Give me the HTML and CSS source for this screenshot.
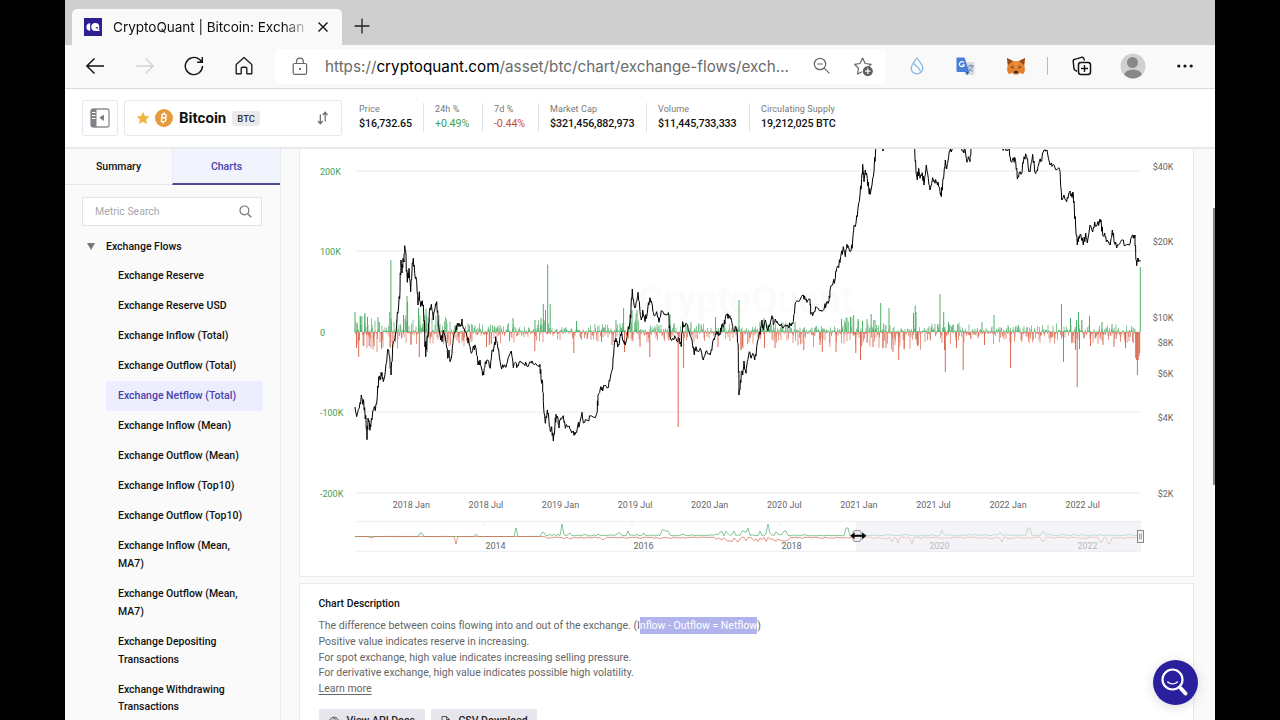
FILE: index.html
```
<!DOCTYPE html>
<html lang="en">
<head>
    <meta charset="UTF-8">
    <meta name="viewport" content="width=device-width, initial-scale=1.0">
    <title>CryptoQuant | Bitcoin: Exchange Netflow (Total)</title>
    <link rel="stylesheet" href="styles.css">
</head>
<body>
<div class="window">
    <div class="tabbar">
        <div class="tab">
            <svg class="favicon" width="18" height="18" viewBox="0 0 18 18"><rect width="18" height="18" fill="#2c1f92"/><path d="M6.2 5.2v7.6a3.8 3.8 0 0 1 0-7.6z" fill="#fff"/><circle cx="11.3" cy="9" r="4" fill="#fff"/><path d="M11.5 9h2.2v2.6z" fill="#2c1f92"/><path d="M12 11.5h3.5V13H12z" fill="#fff"/></svg>
            <span class="tab-title">CryptoQuant | Bitcoin: Exchan</span>
            <svg class="tab-close" width="12" height="12" viewBox="0 0 12 12"><path d="M1.5 1.5l9 9M10.5 1.5l-9 9" stroke="#111" stroke-width="1.4"/></svg>
        </div>
        <svg class="tab-new" width="16" height="16" viewBox="0 0 16 16"><path d="M8 .5v15M.5 8h15" stroke="#222" stroke-width="1.3"/></svg>
    </div>

    <div class="toolbar">
        <div class="nav-icons">
            <svg width="20" height="18" viewBox="0 0 20 18"><path d="M19 9H1.8M9.5 1.5L1.8 9l7.7 7.5" fill="none" stroke="#111" stroke-width="1.4"/></svg>
            <svg width="20" height="18" viewBox="0 0 20 18"><path d="M1 9h17.2M10.5 1.5L18.2 9l-7.7 7.5" fill="none" stroke="#d4d4d4" stroke-width="1.4"/></svg>
            <svg width="20" height="20" viewBox="0 0 20 20"><path d="M18.5 10A8.6 8.6 0 1 1 15.6 3.6L18 6M18.3 1v5.2h-5.2" fill="none" stroke="#111" stroke-width="1.4"/></svg>
            <svg width="20" height="20" viewBox="0 0 20 20"><path d="M2.2 8.6L10 1.6l7.8 7v9.2h-5v-5.4a1.2 1.2 0 0 0-1.2-1.2H8.4a1.2 1.2 0 0 0-1.2 1.2v5.4h-5z" fill="none" stroke="#222" stroke-width="1.4" stroke-linejoin="round"/></svg>
        </div>
        <div class="address">
            <svg width="16" height="19" viewBox="0 0 16 19"><rect x="1.2" y="6.5" width="13.4" height="10.8" rx="1.5" fill="none" stroke="#666" stroke-width="1.2"/><path d="M4.5 6.5V4.6a3.4 3.4 0 0 1 6.8 0v1.9" fill="none" stroke="#666" stroke-width="1.2"/><circle cx="8" cy="12" r="1.1" fill="#555"/></svg>
            <span class="url">https://<b>cryptoquant.com</b>/asset/btc/chart/exchange-flows/exch...</span>
            <svg class="zoom-out" width="18" height="18" viewBox="0 0 18 18"><circle cx="7" cy="7" r="5.7" fill="none" stroke="#666" stroke-width="1.2"/><path d="M4.2 7h5.6M11.2 11.2l5.2 5.2" stroke="#666" stroke-width="1.2"/></svg>
            <svg class="fav-add" width="21" height="21" viewBox="0 0 21 21"><path d="M9 15.800L4.600 18l.9-5.800-4-3.900 5.500-.8L9.600 2l2.500 5.500 6 .8-2.600 2.600" fill="none" stroke="#666" stroke-width="1.200" stroke-linejoin="round"/><circle cx="14.800" cy="15.200" r="5" fill="#5f5f5f"/><path d="M14.800 12.500v5.400M12.100 15.200h5.400" stroke="#fff" stroke-width="1.200"/></svg>
        </div>
        <div class="extensions">
            <svg width="14" height="18" viewBox="0 0 14 18"><path d="M7 1C5 4 1.200 7.700 1.200 11.300A5.800 5.600 0 0 0 12.800 11.300C12.800 7.700 9 4 7 1z" fill="#f5fbff" stroke="#8db9de" stroke-width="1.300"/><path d="M4 6.500c1 3 5.800 3 6.600 8.200" fill="none" stroke="#8db9de" stroke-width="1.300"/></svg>
            <svg class="translate" width="19" height="19" viewBox="0 0 19 19"><rect x="8" y="5" width="10.500" height="13" rx="1" fill="#dcdcdc"/><path d="M1 .5h7.500l4.800 14.500H1.500a1 1 0 0 1-1-1V1z" fill="#4a7fd8"/><path d="M9.500 15h3.800l-2 3z" fill="#2d57a8"/><path d="M11.800 9h6M14.800 7.500V9m2 0c-.5 2.500-2 4-4 5.200M12.800 10.500c.8 1.700 2 3 4 3.900" fill="none" stroke="#5f7fb5"/><path d="M8 5.700a2.500 2.500 0 1 0 .3 2.300H6" fill="none" stroke="#fff" stroke-width="1.200"/></svg>
            <svg class="fox" width="20" height="18" viewBox="0 0 20 18"><path d="M1 1l6 3h6l6-3-.6 7 .6 5.500L17.500 17l-4-1-1.500 1.500H8L6.500 16l-4 1L1 13.500 1.600 8z" fill="#e2802f"/><path d="M1 1l6 3-5 4zM19 1l-6 3 5 4z" fill="#8e4a20"/><path d="M7 4l3 8 3-8z" fill="#ee8f38"/><path d="M5 9l3 1.500-2 .7zM15 9l-3 1.500 2 .7z" fill="#30343a"/><path d="M8.300 14h3.400l.3 2.300H8z" fill="#2a2a2a"/></svg>
            <span class="divider"></span>
            <svg class="collections" width="20" height="20" viewBox="0 0 20 20"><path d="M5.200 15.300L3 14.200a2 2 0 0 1-1-1.500L1.200 5.500a2 2 0 0 1 1.500-2.200L9.500 1.300a2 2 0 0 1 2.400 1.300l.5 2" fill="none" stroke="#111" stroke-width="1.400"/><rect x="6.500" y="6.500" width="12" height="12" rx="2.500" fill="#fff" stroke="#111" stroke-width="1.500"/><path d="M12.500 9v7M9 12.500h7" stroke="#111" stroke-width="1.400"/></svg>
            <svg class="profile" width="26" height="26" viewBox="0 0 26 26"><defs><clipPath id="avatar"><circle cx="13" cy="13" r="12.500"/></clipPath></defs><circle cx="13" cy="13" r="12.500" fill="#d2d0ce"/><g clip-path="url(#avatar)" fill="#8a8886"><circle cx="12.500" cy="9.500" r="5.500"/><ellipse cx="13" cy="22.500" rx="9" ry="6"/></g></svg>
            <svg class="more" width="18" height="6" viewBox="0 0 18 6"><g fill="#111"><circle cx="2.800" cy="3" r="1.600"/><circle cx="9" cy="3" r="1.600"/><circle cx="15.200" cy="3" r="1.600"/></g></svg>
        </div>
    </div>

    <header class="asset-bar">
        <div class="collapse">
            <svg width="20" height="20" viewBox="0 0 20 20"><rect x="1" y="1" width="18" height="18" rx="2" fill="#fff" stroke="#8b8e93" stroke-width="1.300"/><path d="M1 1h5.500v18H1z" fill="#7f8287"/><path d="M2 4.500h3.500M2 7.500h3.500M2 10.500h3.500" stroke="#fff"/><path d="M13.800 6.500v6.500L9.500 9.800z" fill="#6d7075"/></svg>
        </div>
        <div class="asset">
            <svg width="14" height="14" viewBox="0 0 14 14"><path d="M7 .8l1.900 4.200 4.500.5-3.300 3.100.9 4.500L7 10.800l-4 2.300.9-4.500L.6 5.500 5.100 5z" fill="#efb63e"/></svg>
            <svg class="coin" width="18" height="18" viewBox="0 0 18 18"><circle cx="9" cy="9" r="9" fill="#e59a3c"/><path d="M7.300 4.800l-1 8.200M7 5.300h2.700c2.300.2 2 3.300-.3 3.400H6.800M9.300 8.700c2.700.2 2.200 3.900-.5 3.900H6M9.200 3.500L9 5M8.200 12.700L8 14.500" fill="none" stroke="#fff" stroke-width="1.400"/></svg>
            <span class="asset-name">Bitcoin</span>
            <span class="ticker">BTC</span>
            <svg class="swap" width="12" height="14" viewBox="0 0 12 14"><path d="M3.300 3.500v9M1 10l2.300 2.700L5.600 10M8.200 10.500v-9M5.900 4l2.300-2.700L10.500 4" fill="none" stroke="#66696e" stroke-width="1.200"/></svg>
        </div>
        <dl class="stats">
            <div class="w1"><dt>Price</dt><dd>$16,732.65</dd></div>
            <div class="w2"><dt>24h %</dt><dd class="up">+0.49%</dd></div>
            <div class="w3"><dt>7d %</dt><dd class="down">-0.44%</dd></div>
            <div class="w4"><dt>Market Cap</dt><dd>$321,456,882,973</dd></div>
            <div class="w5"><dt>Volume</dt><dd>$11,445,733,333</dd></div>
            <div class="w6"><dt>Circulating Supply</dt><dd>19,212,025 BTC</dd></div>
        </dl>
    </header>

    <div class="page">
        <aside class="sidebar">
            <div class="side-tabs"><span>Summary</span><span class="active">Charts</span></div>
            <div class="search">
                <span>Metric Search</span>
                <svg width="13" height="13" viewBox="0 0 13 13"><circle cx="5.400" cy="5.400" r="4.400" fill="none" stroke="#777" stroke-width="1.200"/><path d="M8.700 8.700l3.600 3.600" stroke="#777" stroke-width="1.300"/></svg>
            </div>
            <div class="group"><i class="caret"></i>Exchange Flows</div>
            <ul class="metrics">
                <li>Exchange Reserve</li>
                <li>Exchange Reserve USD</li>
                <li>Exchange Inflow (Total)</li>
                <li>Exchange Outflow (Total)</li>
                <li class="active">Exchange Netflow (Total)</li>
                <li>Exchange Inflow (Mean)</li>
                <li>Exchange Outflow (Mean)</li>
                <li>Exchange Inflow (Top10)</li>
                <li>Exchange Outflow (Top10)</li>
                <li>Exchange Inflow (Mean, MA7)</li>
                <li>Exchange Outflow (Mean, MA7)</li>
                <li>Exchange Depositing Transactions</li>
                <li>Exchange Withdrawing Transactions</li>
            </ul>
        </aside>
        <main class="content">
            <section class="card chart-card">
                <svg id="chart" width="893" height="427" viewBox="300 149 893 427"></svg>
            </section>
            <section class="card description">
                <h2>Chart Description</h2>
                <p>The difference between coins flowing into and out of the exchange. (I<mark>nflow - Outflow = Netflow</mark>)</p>
                <p>Positive value indicates reserve in increasing.</p>
                <p>For spot exchange, high value indicates increasing selling pressure.</p>
                <p>For derivative exchange, high value indicates possible high volatility.</p>
                <p><a class="learn">Learn more</a></p>
                <div class="buttons">
                    <span class="btn"><svg width="12" height="12" viewBox="0 0 12 12"><path d="M3 10a4.500 4.500 0 1 1 6 0M4.500 4.500a2 2 0 1 1 2 3" fill="none" stroke="#555"/></svg>View API Docs</span>
                    <span class="btn"><svg width="12" height="12" viewBox="0 0 12 12"><path d="M2 11V1.500h4.500L9.500 4.500V7M6.500 1.500v3h3M5 8h5v3" fill="none" stroke="#555"/></svg>CSV Download</span>
                </div>
            </section>
        </main>
    </div>
    <div class="scrollbar"></div>
    <div class="help">
        <svg width="45" height="45" viewBox="0 0 45 45"><circle cx="19.500" cy="19.500" r="10" fill="none" stroke="#fff" stroke-width="2.200"/><path d="M14.800 22c2.800 2.400 6.800 2.400 9.600 0" fill="none" stroke="#fff" stroke-width="1.500" stroke-linecap="round"/><path d="M26 26.500l2 2" stroke="#fff" stroke-width="2.500"/><path d="M28 28.500l4.500 5" stroke="#fff" stroke-width="4" stroke-linecap="round"/></svg>
    </div>
</div>
<script src="chart.js"></script>
</body>
</html>
```

FILE: styles.css
```
* { box-sizing: border-box; }
body { margin: 0; background: #000; font-family: Roboto, "Liberation Sans", sans-serif; color: #111; height: 720px; overflow: hidden; }
svg { display: block; flex: none; }
.window { position: relative; width: 1150px; height: 720px; margin: 0 auto; background: #fff; overflow: hidden; }

/* browser chrome */
.tabbar { height: 45px; background: #cfcfcf; display: flex; align-items: flex-end; padding-left: 7px; font-family: Inter, sans-serif; }
.tab { width: 270px; height: 36px; background: #f9f9f9; border-radius: 5px 5px 0 0; display: flex; align-items: center; padding: 0 13px 0 12px; }
.tab-title { width: 196px; margin-left: 11px; font-size: 13.6px; letter-spacing: -.05px; white-space: nowrap; -webkit-mask-image: linear-gradient(90deg, #000 170px, transparent 198px); mask-image: linear-gradient(90deg, #000 170px, transparent 198px); }
.tab-close { margin-left: auto; }
.tab-new { margin: 0 0 11px 12px; }
.toolbar { height: 44px; background: #f9f9f9; border-bottom: 1px solid #d9d9d9; display: flex; align-items: center; padding-bottom: 1px; font-family: Inter, sans-serif; }
.nav-icons { display: flex; align-items: center; gap: 29.5px; width: 210px; padding-left: 20px; }
.address { width: 611px; height: 35px; background: #fff; border-radius: 4px; display: flex; align-items: center; padding: 0 12px 0 17px; }
.url { margin-left: 17px; font-size: 15.25px; color: #6b6b6b; white-space: nowrap; }
.url b { font-weight: 400; color: #000; }
.zoom-out { margin-left: auto; }
.fav-add { margin-left: 22px; }
.extensions { flex: 1; display: flex; align-items: center; padding-left: 24px; }
.translate { margin-left: 32px; }
.fox { margin-left: 31px; }
.divider { width: 1px; height: 18px; background: #bbb; margin-left: 21px; }
.collections { margin-left: 24px; }
.profile { margin-left: 28px; }
.more { margin-left: 30px; }

/* asset header */
.asset-bar { height: 60px; border-bottom: 2px solid #e8e9ec; display: flex; align-items: center; padding-left: 17px; }
.collapse, .asset { height: 36px; border: 1px solid #e6e7ea; border-radius: 3px; display: flex; align-items: center; }
.collapse { width: 36px; justify-content: center; margin-right: 6px; }
.asset { width: 218px; padding: 0 12px 0 11px; }
.coin { margin-left: 5px; }
.asset-name { font-size: 15px; font-weight: 700; margin-left: 6px; }
.ticker { margin-left: 6px; padding: 0 5px; height: 15px; line-height: 15px; border-radius: 3px; background: #e9eaed; font-size: 9.5px; font-weight: 500; color: #333; }
.swap { margin-left: auto; }
.stats { display: flex; margin: -1px 0 0 17px; }
.stats div { height: 29px; border-right: 1px solid #e2e3e6; margin-right: 11px; }
.stats div:last-child { border: 0; }
.stats dt { font-size: 9px; line-height: 13px; color: #777; letter-spacing: .1px; white-space: nowrap; }
.stats dd { margin: 0; font-size: 10.7px; line-height: 15px; font-weight: 500; letter-spacing: -.1px; white-space: nowrap; }
.stats .up, .stats .down { font-weight: 400; }
.up { color: #3fa24c; }
.down { color: #c8503c; }
.w1 { width: 65px; }
.w2 { width: 48px; }
.w3 { width: 45px; }
.w4 { width: 97px; }
.w5 { width: 92px; }

/* page */
.page { display: flex; height: 571px; background: #fafafb; }
.sidebar { width: 216px; border-right: 1px solid #e8e9ec; font-size: 10.5px; font-weight: 500; }
.side-tabs { display: flex; height: 36px; }
.side-tabs span { flex: 1; text-align: center; line-height: 35px; border-bottom: 1px solid #e6e7ea; }
.side-tabs .active { color: #4a42ac; background: #f1f3fd; border-bottom: 2px solid #4b4c93; border-left: 1px solid #e8e9f3; }
.search { width: 180px; height: 29px; margin: 12px 0 0 17px; border: 1px solid #e3e4e7; border-radius: 2px; background: #fff; display: flex; justify-content: space-between; align-items: center; padding: 0 9px 0 12px; font-weight: 400; color: #a5a7ab; }
.group { display: flex; align-items: center; height: 18px; margin: 11px 0 5px 22px; }
.caret { border: 4px solid transparent; border-top: 7px solid #777; border-bottom: 0; margin-right: 11px; }
.metrics { list-style: none; margin: 0 0 0 41px; padding: 0; width: 157px; }
.metrics li { padding: 6.15px 15px 6.15px 12px; line-height: 17.75px; }
.metrics li:first-child { padding-top: 7px; }
.metrics .active { color: #4a42ac; background: #eceefd; border-radius: 2px; }
.content { padding-left: 18px; }
.card { width: 895px; background: #fff; border: 1px solid #e8e9ec; }
.chart-card { height: 428px; border-top: 0; }
.description { margin-top: 6px; height: 200px; padding: 12px 18.5px; font-size: 10.5px; color: #666; }
.description h2 { margin: 0 0 5px; font-size: 10.4px; line-height: 16px; padding-bottom: 1px; font-weight: 500; color: #111; }
.description p { margin: 0; line-height: 15.8px; white-space: nowrap; }
.description mark { background: #b1b4ec; color: #fff; padding: 2px 0; }
.learn { text-decoration: underline; text-underline-offset: 2px; }
.buttons { display: flex; gap: 6px; margin-top: 12px; }
.btn { width: 106px; height: 24px; background: #e6e6ec; border-radius: 2px; display: flex; align-items: center; padding-left: 9px; gap: 7px; font-weight: 500; color: #222; }

/* chart */
#chart text { font-size: 9px; fill: #666; }
#chart .green { fill: #45a055; }
#chart .watermark { font-size: 38px; font-weight: 500; fill: #fbfbfb; }
#chart .grid { stroke: #f1f1f2; stroke-width: 1.3; }
#chart .in { fill: none; stroke: #4fae67; }
#chart .out { fill: none; stroke: #d96a50; }
#chart .price { fill: none; stroke: #000; stroke-width: 1; stroke-linejoin: round; }
#chart .thin { stroke-width: .7; }
#chart .nav { stroke-width: .7; }

.scrollbar { position: absolute; right: 0; top: 208px; width: 2px; height: 277px; background: #858585; }
.help { position: absolute; right: 17px; top: 660px; width: 45px; height: 45px; border-radius: 50%; background: #2a1f9c; box-shadow: 0 2px 12px rgba(0,0,0,.15); }
```

FILE: chart.js
```
const svg = document.getElementById('chart');
let out = '';

// small seeded generator so the bars stay the same on each load
let seed = 7;
function rnd() {
    seed = (seed * 16807) % 2147483647;
    return seed / 2147483647;
}

function text(x, y, value, cls, anchor) {
    out += `<text x="${x}" y="${y}" class="${cls || ''}" text-anchor="${anchor || 'middle'}">${value}</text>`;
}

text(746, 313, 'CryptoQuant', 'watermark');

[[171, '200K'], [251, '100K'], [332, '0'], [412, '-100K'], [493, '-200K']].forEach(([y, label]) => {
    out += `<path class="grid" d="M355 ${y}H1141"/>`;
    text(320, y + 3.5, label, 'green', 'start');
});
[[166, '$40K'], [241, '$20K'], [317.5, '$10K'], [342, '$8K'], [373.5, '$6K'], [417.5, '$4K'], [493.5, '$2K']].forEach(([y, label]) => {
    text(1173.5, y + 3.5, label, '', 'end');
});
['2018 Jan', '2018 Jul', '2019 Jan', '2019 Jul', '2020 Jan', '2020 Jul', '2021 Jan', '2021 Jul', '2022 Jan', '2022 Jul'].forEach((label, i) => {
    text(411.3 + i * 74.6, 508, label);
});

// netflow bars: [from, to, typical inflow, typical outflow]
const levels = [
    [355, 376, 17, 16], [376, 400, 11, 16], [400, 420, 18, 9], [420, 450, 16, 12], [450, 475, 10, 11],
    [475, 515, 8, 9], [515, 535, 4, 5], [535, 552, 12, 9], [552, 590, 4, 6], [590, 625, 8, 8],
    [625, 642, 17, 7], [642, 700, 8, 8], [700, 736, 7, 7], [736, 760, 5, 15], [760, 795, 8, 9],
    [795, 840, 5, 14], [840, 875, 13, 12], [875, 925, 9, 14], [925, 960, 8, 9], [960, 1055, 6, 9],
    [1055, 1085, 11, 9], [1085, 1136, 6, 10]
];
let inflow = '', outflow = '';
levels.forEach(([from, to, up, down]) => {
    for (let x = from; x < to; x += 0.5) {
        const h = Math.pow(rnd(), 2.6);
        if (rnd() > 0.47) {
            inflow += `M${x} 332v${(-h * up * 1.1 - 1).toFixed(1)}`;
        } else {
            outflow += `M${x} 332v${(h * down * 1.2 + 1.2).toFixed(1)}`;
        }
    }
});
out += `<path class="in thin" d="${inflow}"/><path class="out thin" d="${outflow}"/>`;

const spikes = [
    [355, 312], [360.5, 317], [365, 313], [367.5, 317], [378, 317], [390.9, 260], [389.8, 312], [407, 296], [407.6, 302], [418.5, 308], [426, 309],
    [403.5, 315], [513, 318], [535, 320], [543.3, 304], [545.5, 310], [547.7, 264.5], [550.2, 304], [541, 318], [576.5, 321],
    [616, 320], [623.6, 308], [632, 310], [637, 310], [670, 314], [691, 322], [715.5, 317], [739, 300], [760, 322], [764, 318], [795, 322],
    [841.5, 319], [847, 318], [850.5, 316.5], [853.7, 315], [858, 319], [862.5, 321], [867, 319], [871.2, 314], [875, 320], [880.7, 303], [889, 308],
    [913.5, 313], [915.2, 305.5], [916, 312], [940, 294], [943.7, 312], [948.5, 322], [982, 322], [994, 315], [1061.5, 304], [1070.5, 318],
    [1076.5, 320], [1078.5, 312], [1089.5, 316], [1102, 322], [1112, 324], [1140.3, 267],
    [356.5, 348], [358.7, 357], [363.8, 346], [369.2, 346], [374, 346], [381.5, 349], [390, 347], [411, 345], [419.3, 357], [427.3, 352],
    [459, 343], [486.5, 347], [489.3, 345], [509.5, 341], [534.8, 351], [573.8, 353], [601.5, 342], [612, 345], [624.5, 352], [640, 347], [649.8, 357],
    [678.2, 427], [683.6, 368], [718, 347], [741, 350], [742.5, 347], [764.5, 348], [775, 348], [803.8, 350], [820, 345], [822.3, 352], [836, 352],
    [855.8, 353], [860.5, 360], [873, 347], [883, 348], [886, 348], [893, 352], [898.7, 360], [904, 349], [917.5, 346], [944.5, 350], [945.3, 372],
    [963.2, 370], [956.5, 348], [984.5, 345], [1010.5, 368], [1063.5, 362], [1075.5, 350], [1077.2, 387], [1079.5, 349], [1090.5, 346], [1103, 345], [1114, 347], [1125.5, 348],
    [1135.7, 358], [1136.6, 360], [1137.4, 375], [1138.2, 360], [1139, 356], [1139.7, 353]
];
spikes.forEach(([x, y]) => {
    out += `<path class="${y < 332 ? 'in' : 'out'}" d="M${x} 332V${y}"/>`;
});

// BTC price
const price = [355,407,356.7,416.7,359.3,408,361.3,395,362.7,404,363.7,401,365,414,366,420,367,439.7,368,418,369.7,428,370.7,427,372.7,412,374,408,375.3,410.7,377.3,396.7,378.7,376.7,380.7,378,382,372.7,383.3,381.7,385.3,371.7,387.3,353.3,388.7,350,390,361.7,391,375,392.7,345,394.7,340,396.7,325,398.7,305,400,291.7,401,260,402,273,403,258.3,404,262,404.7,245.7,406,255,407.3,282.3,409,268.3,410.7,291.7,412,270,413.3,258.3,414.7,273.3,416.7,281.7,418,305,419.3,291.7,420.7,306.7,422.3,300.7,423.7,315,424.7,331.7,425.7,356.7,426.7,341.7,428.3,335,429.3,311.7,431.3,304.3,433.3,320,435,308.3,436.7,301.7,438.3,325,440,335,442,341.7,443.3,330,446,341.7,447.7,358.3,449,350,450,361.7,452,353.3,453.3,338.3,455.7,331.7,457.3,323.3,460,326.7,462,319,463.3,328.3,465.7,331.7,467.3,336.7,469.3,345,471.3,353.3,473.3,346,476,348.3,478,365,480,360,482,370,483.7,375,485.3,361.7,487.7,360,490.3,368.3,492,350,494,347,495.7,336.7,497.3,343.3,499.3,356.7,501.7,369,504.3,365,506,367.3,508,358.3,511.3,351,513.3,367.7,515.3,362.3,516.7,367.7,519.3,361.7,523.3,363.3,527.3,366.7,530,361.7,533.3,364,537.3,365.7,540,364.3,541,378.3,542.7,383.3,543.3,401.7,545.3,423.3,547.3,410,549,421.7,550.3,431.7,551.7,426.7,553.3,441,555,425,556,414.3,558,418,559,428,560.7,418.3,563.3,415.7,565.3,428.3,568.3,426.7,570.7,430,573.3,431,575.3,434.3,577.3,428.3,580,421.7,582,412.3,583.3,423,586.7,420,591.7,416,595.3,417.7,597.3,411.7,598,395,600.7,386.7,602.7,391,605.3,385,608.3,387.7,610.7,375,612.7,368,614,348.3,616,338,617.7,347,620,336.7,621.7,331.7,624,343,625.3,345,627.3,335,630,321.7,631,308.3,632.3,289,634,305,635,308,636.7,301.7,638,292.3,640,311.7,641.3,320,642.7,310,645,321.7,647.3,313.3,650,297.7,652.3,305,654,315.7,656.7,311.7,659,322.3,661.3,310.7,664,314.3,667.3,314.3,669,316.7,670,336.7,672.7,338.3,674.7,335.7,676.7,341,679.3,338,681.3,346.7,682.7,321.7,684.7,326.7,686.7,324,689.3,331.7,692,340,694.3,355,696,346.7,698.7,351.7,701,350,703.3,360,705.7,351.7,708.3,354,710.3,355,712.7,341.7,715.3,335,718,331.7,720,335,721.7,325,724,325,725.3,318.3,727.3,313.7,729.3,317.7,731,318.3,732.7,326.7,734,331.7,736,326.7,737.3,335,738.3,351.7,739,395,740,390,741.3,371.7,742.7,375,744,361,746,373.3,747.3,361.7,749.3,351.7,751.3,358,752.7,353.3,754.7,360,756.7,346.7,758.7,338.3,760.7,328.3,762,320,763.3,330,765.3,320,767.3,330,769.3,326.7,772,315.7,773.3,325,775.3,319,778,324,781.3,324,784,326.7,787.3,325,791.3,326,793.3,321.7,795,305,796.7,301,800,300,803.3,295,805.3,300,808,300,810,299,810.7,314.3,814,311.7,816.7,307.3,819.3,310.7,824,309.3,826.7,301.7,829,301,830,290,832.7,285,835.3,278.3,836.7,268.3,838.7,267.7,840.7,256.7,843.3,246.7,845.3,256.7,847,244.3,848.7,247.7,851,251,852.7,240,854,225,856,223,858,208,860,195,861.7,178.3,862.7,164.3,864,181.7,865.3,170,867.3,178.3,868.7,188.3,870.3,194.3,872,185,874,171.7,875.7,149,878,130,882,140,883,151,884,140,900,120,914,140,914.7,149,916,171.7,917.3,180,918.7,168.3,920,178.3,922.3,172.7,924,185,926.3,165,928.3,178.3,930,190,932.7,177.7,935,183.3,936.7,181.7,938.7,186.7,940,191.7,941.3,196.7,942.7,181.7,944,173.3,945.3,160,946.7,169,948.7,156.7,950.3,149,951.3,152,953,145,961,145,962.3,151,963.5,152,965,149,967,162.3,968.3,156.7,970,161.7,971,148,973,130,1001,130,1003,150,1004,146,1007,150,1009.3,149,1010.7,161,1013.3,157.7,1015.7,161.7,1017.3,179,1019.3,172,1022,173,1024,156.7,1026.7,156.7,1028,165,1030,172,1032.7,154.3,1034.7,171.7,1037.3,171,1039.3,161.7,1041.7,161,1044,150,1047,150,1050,165,1053.3,164.3,1056,170,1059,167.7,1060.3,176.7,1061.7,200,1064,195,1066,200,1068,198.3,1070,191,1071.7,196.7,1073.3,193.3,1074.3,208,1075.7,228,1077.3,245,1078.7,236.7,1080.7,234,1083.3,245,1085.7,233,1087.3,243,1090,225,1092.7,232,1094.7,222,1096.7,226,1100,219,1101.3,223,1102.7,235,1104.7,233,1106.3,241.7,1108.7,241.7,1110.3,245,1112.3,230,1114,241.7,1116.7,248,1119.3,244.3,1121.7,240,1124.3,245.7,1129.3,245,1131.7,236.7,1133.3,238.3,1135,235,1135.7,255,1136.7,265.7,1137.7,258,1138.7,261.7,1140.7,260.7];
let line = `M${price[0]} ${price[1]}`;
for (let i = 2; i < price.length; i += 2) {
    const mx = (price[i] + price[i - 2]) / 2;
    const my = (price[i + 1] + price[i - 1]) / 2;
    line += `L${(mx - 0.3).toFixed(1)} ${(my + (rnd() - 0.5) * 6).toFixed(1)}L${(mx + 0.3).toFixed(1)} ${(my + (rnd() - 0.5) * 6).toFixed(1)}L${price[i]} ${price[i + 1]}`;
}
out += `<path class="price" d="${line}"/>`;

// navigator
out += '<path class="grid" d="M355 521.5H1141M355 551.5H1141M484 521v5M632 521v5M780 521v5"/>';
function navLine(cls, dir, peaks) {
    let d = 'M355 536.5';
    for (let x = 356; x < 1140; x += 2) {
        const noise = x < 545 ? 0.1 : x > 715 && x < 790 ? 4.5 : 1.6;
        const peak = peaks.find(p => Math.abs(p[0] - x) <= 1);
        d += `L${x} ${peak ? peak[1] : (536.5 + dir * ((x < 545 ? 0 : .7) + Math.pow(rnd(), 2) * noise)).toFixed(1)}`;
    }
    out += `<path class="${cls} nav" d="${d}"/>`;
}
navLine('in', -1, [[421, 533], [476, 534], [516, 528], [543, 532.5], [561.3, 524], [570, 533], [619, 533], [628, 531], [644, 533], [663, 530], [667, 531], [720, 532], [734, 531], [743, 531], [748, 528], [768.5, 524], [785, 531], [847, 528], [941.5, 530], [970, 533.5], [1000, 532], [1029, 528], [1043, 532]]);
navLine('out', 1, [[371, 537.5], [455.3, 544], [603, 539.5], [728, 541], [738, 542], [785, 541], [892, 542], [897.5, 543], [911.5, 544], [1001.5, 542], [1043, 541], [1101, 542], [1109, 543.5]]);
['2014', '2016', '2018', '2020', '2022'].forEach((label, i) => text(495.5 + i * 148, 548.5, label));
out += '<rect x="856" y="521.5" width="285" height="30" fill="#ececf4" opacity=".6"/>';
out += '<rect x="1137.5" y="530.5" width="6" height="12" fill="#f5f5f5" stroke="#888"/><path d="M1139.7 533.5v6M1141.3 533.5v6" stroke="#888" stroke-width=".8"/>';
out += '<rect x="853" y="530.5" width="8" height="11" rx="2" fill="#eee" stroke="#999"/>';
out += '<path d="M849.8 535.8l5-4v2.7h7v-2.7l5 4-5 4v-2.7h-7v2.7z" fill="#000" stroke="#fff" stroke-width=".5"/>';

svg.innerHTML = out;
```
